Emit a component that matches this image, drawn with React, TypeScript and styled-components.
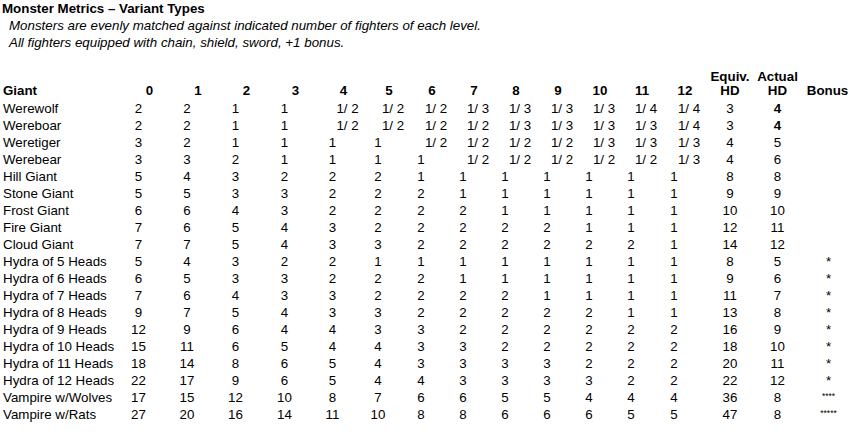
import React from "react";
import styled, { createGlobalStyle } from "styled-components";

type Kind = "int" | "frac" | "sum";

interface MonsterRow {
    name: string;
    levels: string[];
    equiv: number;
    actual: number;
    bonus?: string;
    boldActual?: boolean;
}

// fractions are shown the way the sheet prints them
const h = "1/ 2";
const t = "1/ 3";
const q = "1/ 4";

const split = (s: string) => s.split(" ");

const rows: MonsterRow[] = [
    { name: "Werewolf", levels: ["2", "2", "1", "1", h, h, h, t, t, t, t, q, q], equiv: 3, actual: 4, boldActual: true },
    { name: "Wereboar", levels: ["2", "2", "1", "1", h, h, h, h, t, t, t, t, q], equiv: 3, actual: 4, boldActual: true },
    { name: "Weretiger", levels: ["3", "2", "1", "1", "1", "1", h, h, h, h, t, t, t], equiv: 4, actual: 5 },
    { name: "Werebear", levels: ["3", "3", "2", "1", "1", "1", "1", h, h, h, h, h, t], equiv: 4, actual: 6 },
    { name: "Hill Giant", levels: split("5 4 3 2 2 2 1 1 1 1 1 1 1"), equiv: 8, actual: 8 },
    { name: "Stone Giant", levels: split("5 5 3 3 2 2 2 1 1 1 1 1 1"), equiv: 9, actual: 9 },
    { name: "Frost Giant", levels: split("6 6 4 3 2 2 2 2 1 1 1 1 1"), equiv: 10, actual: 10 },
    { name: "Fire Giant", levels: split("7 6 5 4 3 2 2 2 2 2 1 1 1"), equiv: 12, actual: 11 },
    { name: "Cloud Giant", levels: split("7 7 5 4 3 3 2 2 2 2 2 2 1"), equiv: 14, actual: 12 },
    { name: "Hydra of 5 Heads", levels: split("5 4 3 2 2 1 1 1 1 1 1 1 1"), equiv: 8, actual: 5, bonus: "*" },
    { name: "Hydra of 6 Heads", levels: split("6 5 3 3 2 2 2 1 1 1 1 1 1"), equiv: 9, actual: 6, bonus: "*" },
    { name: "Hydra of 7 Heads", levels: split("7 6 4 3 3 2 2 2 2 1 1 1 1"), equiv: 11, actual: 7, bonus: "*" },
    { name: "Hydra of 8 Heads", levels: split("9 7 5 4 3 3 2 2 2 2 2 1 1"), equiv: 13, actual: 8, bonus: "*" },
    { name: "Hydra of 9 Heads", levels: split("12 9 6 4 4 3 3 2 2 2 2 2 2"), equiv: 16, actual: 9, bonus: "*" },
    { name: "Hydra of 10 Heads", levels: split("15 11 6 5 4 4 3 3 2 2 2 2 2"), equiv: 18, actual: 10, bonus: "*" },
    { name: "Hydra of 11 Heads", levels: split("18 14 8 6 5 4 3 3 3 3 2 2 2"), equiv: 20, actual: 11, bonus: "*" },
    { name: "Hydra of 12 Heads", levels: split("22 17 9 6 5 4 4 3 3 3 3 2 2"), equiv: 22, actual: 12, bonus: "*" },
    { name: "Vampire w/Wolves", levels: split("17 15 12 10 8 7 6 6 5 5 4 4 4"), equiv: 36, actual: 8, bonus: "****" },
    { name: "Vampire w/Rats", levels: split("27 20 16 14 11 10 8 8 6 6 6 5 5"), equiv: 47, actual: 8, bonus: "*****" },
];

const levelHeads = ["0", "1", "2", "3", "4", "5", "6", "7", "8", "9", "10", "11", "12"];

const App: React.FC = () => {
    return (
        <Page>
            <GlobalStyle />
            <Title>Monster Metrics – Variant Types</Title>
            <Note>Monsters are evenly matched against indicated number of fighters of each level.</Note>
            <Note>All fighters equipped with chain, shield, sword, +1 bonus.</Note>

            <Sheet>
                <HeadCell $left>Giant</HeadCell>
                {levelHeads.map((l) => (
                    <HeadCell key={l}>{l}</HeadCell>
                ))}
                <HeadCell>Equiv.<br />HD</HeadCell>
                <HeadCell>Actual<br />HD</HeadCell>
                <HeadCell>Bonus</HeadCell>

                {rows.map((r) => (
                    <React.Fragment key={r.name}>
                        <NameCell>{r.name}</NameCell>
                        {r.levels.map((v, i) => (
                            <Value key={i} $kind={v.includes("/") ? "frac" : "int"}>{v}</Value>
                        ))}
                        <Value $kind="sum">{r.equiv}</Value>
                        <Value $kind="sum" $bold={r.boldActual}>{r.actual}</Value>
                        <Stars $many={(r.bonus ?? "").length > 1}>{r.bonus ?? ""}</Stars>
                    </React.Fragment>
                ))}
            </Sheet>
        </Page>
    );
};

const GlobalStyle = createGlobalStyle`
    html, body {
        margin: 0;
        padding: 0;
        background: #ffffff;
    }
    body {
        font-family: "Liberation Sans", Arial, sans-serif;
        font-size: 13.33px;
        color: #000000;
    }
`;

const Page = styled.div`
    width: 864px;
    height: 437px;
    overflow: hidden;
    background: #ffffff;
`;

const Title = styled.div`
    font-weight: bold;
    line-height: 17px;
    padding-left: 2px;
    white-space: nowrap;
`;

const Note = styled.div`
    font-style: italic;
    line-height: 17px;
    padding-left: 9px;
    white-space: nowrap;
`;

// name, levels 0-12, equiv HD, actual HD, bonus
const Sheet = styled.div`
    display: grid;
    grid-template-columns: 125px 49px 48px 49px 49px 47px 44px 42px 42px 42px 42px 42px 42px 44px 46px 49px 51px;
    margin-top: 19px;
    width: 853px;
`;

const HeadCell = styled.div<{ $left?: boolean }>`
    align-self: end;
    font-weight: bold;
    line-height: 14px;
    padding-bottom: 2px;
    padding-left: ${(p) => (p.$left ? "3px" : "0")};
    text-align: ${(p) => (p.$left ? "left" : "center")};
    white-space: nowrap;
`;

const NameCell = styled.div`
    height: 17px;
    line-height: 17px;
    padding-left: 3px;
    white-space: nowrap;
`;

// integers sit left of the column head, fractions a little right of it
const Value = styled.div<{ $kind: Kind; $bold?: boolean }>`
    height: 17px;
    line-height: 17px;
    text-align: center;
    white-space: nowrap;
    font-weight: ${(p) => (p.$bold ? "bold" : "normal")};
    padding-right: ${(p) => (p.$kind === "int" ? "22px" : "0")};
    padding-left: ${(p) => (p.$kind === "frac" ? "8px" : "0")};
`;

// the multi-star bonuses are printed in a small font
const Stars = styled.div<{ $many: boolean }>`
    height: 17px;
    line-height: ${(p) => (p.$many ? "14px" : "17px")};
    font-size: ${(p) => (p.$many ? "8.5px" : "inherit")};
    text-align: center;
    white-space: nowrap;
    padding-left: 2px;
`;

export default App;
